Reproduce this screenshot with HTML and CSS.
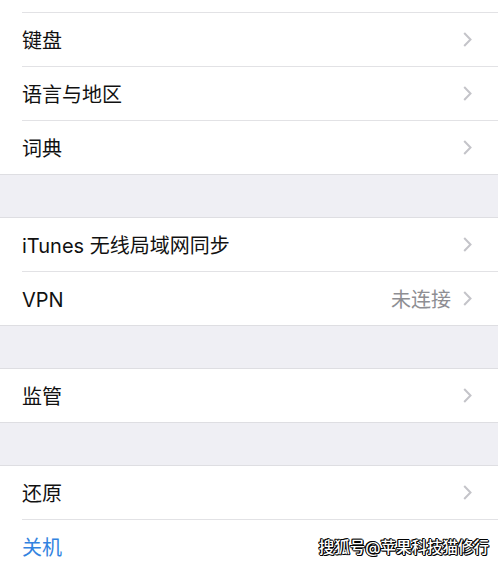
FILE: index.html
```html
<!DOCTYPE html>
<html>
  <head>
    <title>通用</title>
    <link rel="stylesheet" href="styles.css">
  </head>
  <body>
    <div class="screen">
      <div class="group first">
        <div class="row"><div class="row-inner top"></div></div>
        <div class="row">
          <div class="row-inner">
            <span class="label">键盘</span>
            <svg class="chevron" width="9" height="15" viewBox="0 0 9 15"><polyline points="1.2,1 7.5,7.5 1.2,14" /></svg>
          </div>
        </div>
        <div class="row">
          <div class="row-inner">
            <span class="label">语言与地区</span>
            <svg class="chevron" width="9" height="15" viewBox="0 0 9 15"><polyline points="1.2,1 7.5,7.5 1.2,14" /></svg>
          </div>
        </div>
        <div class="row">
          <div class="row-inner">
            <span class="label">词典</span>
            <svg class="chevron" width="9" height="15" viewBox="0 0 9 15"><polyline points="1.2,1 7.5,7.5 1.2,14" /></svg>
          </div>
        </div>
      </div>

      <div class="gap"></div>

      <div class="group">
        <div class="row">
          <div class="row-inner">
            <span class="label">iTunes 无线局域网同步</span>
            <svg class="chevron" width="9" height="15" viewBox="0 0 9 15"><polyline points="1.2,1 7.5,7.5 1.2,14" /></svg>
          </div>
        </div>
        <div class="row">
          <div class="row-inner">
            <span class="label">VPN</span>
            <span class="value">未连接</span>
            <svg class="chevron" width="9" height="15" viewBox="0 0 9 15"><polyline points="1.2,1 7.5,7.5 1.2,14" /></svg>
          </div>
        </div>
      </div>

      <div class="gap"></div>

      <div class="group">
        <div class="row">
          <div class="row-inner">
            <span class="label">监管</span>
            <svg class="chevron" width="9" height="15" viewBox="0 0 9 15"><polyline points="1.2,1 7.5,7.5 1.2,14" /></svg>
          </div>
        </div>
      </div>

      <div class="gap"></div>

      <div class="group">
        <div class="row">
          <div class="row-inner">
            <span class="label">还原</span>
            <svg class="chevron" width="9" height="15" viewBox="0 0 9 15"><polyline points="1.2,1 7.5,7.5 1.2,14" /></svg>
          </div>
        </div>
        <div class="row">
          <div class="row-inner">
            <span class="label action">关机</span>
          </div>
        </div>
      </div>

      <div class="watermark">搜狐号@苹果科技猫修行</div>
    </div>
  </body>
</html>
```

FILE: styles.css
```css
body {
  margin: 0;
  padding: 0;
  background-color: #fff;
  font-family: "Inter", "Noto Sans CJK SC", sans-serif;
  overflow: hidden;
}

.screen {
  position: relative;
  width: 498px;
  height: 565px;
  background-color: #efeff4;
  overflow: hidden;
}

.group {
  background-color: #fff;
  border-top: 1px solid #dedee2;
  border-bottom: 1px solid #dedee2;
}

.group.first {
  border-top: none;
}

.gap {
  height: 42px;
}

.row {
  padding-left: 22px;
}

.row-inner {
  display: flex;
  align-items: center;
  height: 53px;
  padding-right: 26px;
  border-bottom: 1px solid #e2e2e5;
}

.row:last-child .row-inner {
  border-bottom: none;
}

.row-inner.top {
  height: 12px;
}

.label {
  flex: 1;
  font-size: 20px;
  color: #111;
  line-height: 1;
  padding-top: 2px;
}

.label.action {
  color: #3283e0;
}

.value {
  font-size: 20px;
  color: #8e8e93;
  line-height: 1;
  padding-top: 2px;
  margin-right: 12px;
}

.chevron polyline {
  fill: none;
  stroke: #c4c4c9;
  stroke-width: 2;
}

.watermark {
  position: absolute;
  right: 9px;
  bottom: 8px;
  font-size: 15.5px;
  font-weight: 500;
  color: #fff;
  text-shadow: 1px 0 0 #000, -1px 0 0 #000, 0 1px 0 #000, 0 -1px 0 #000, 1px 1px 0 #000, -1px -1px 0 #000;
}
```
